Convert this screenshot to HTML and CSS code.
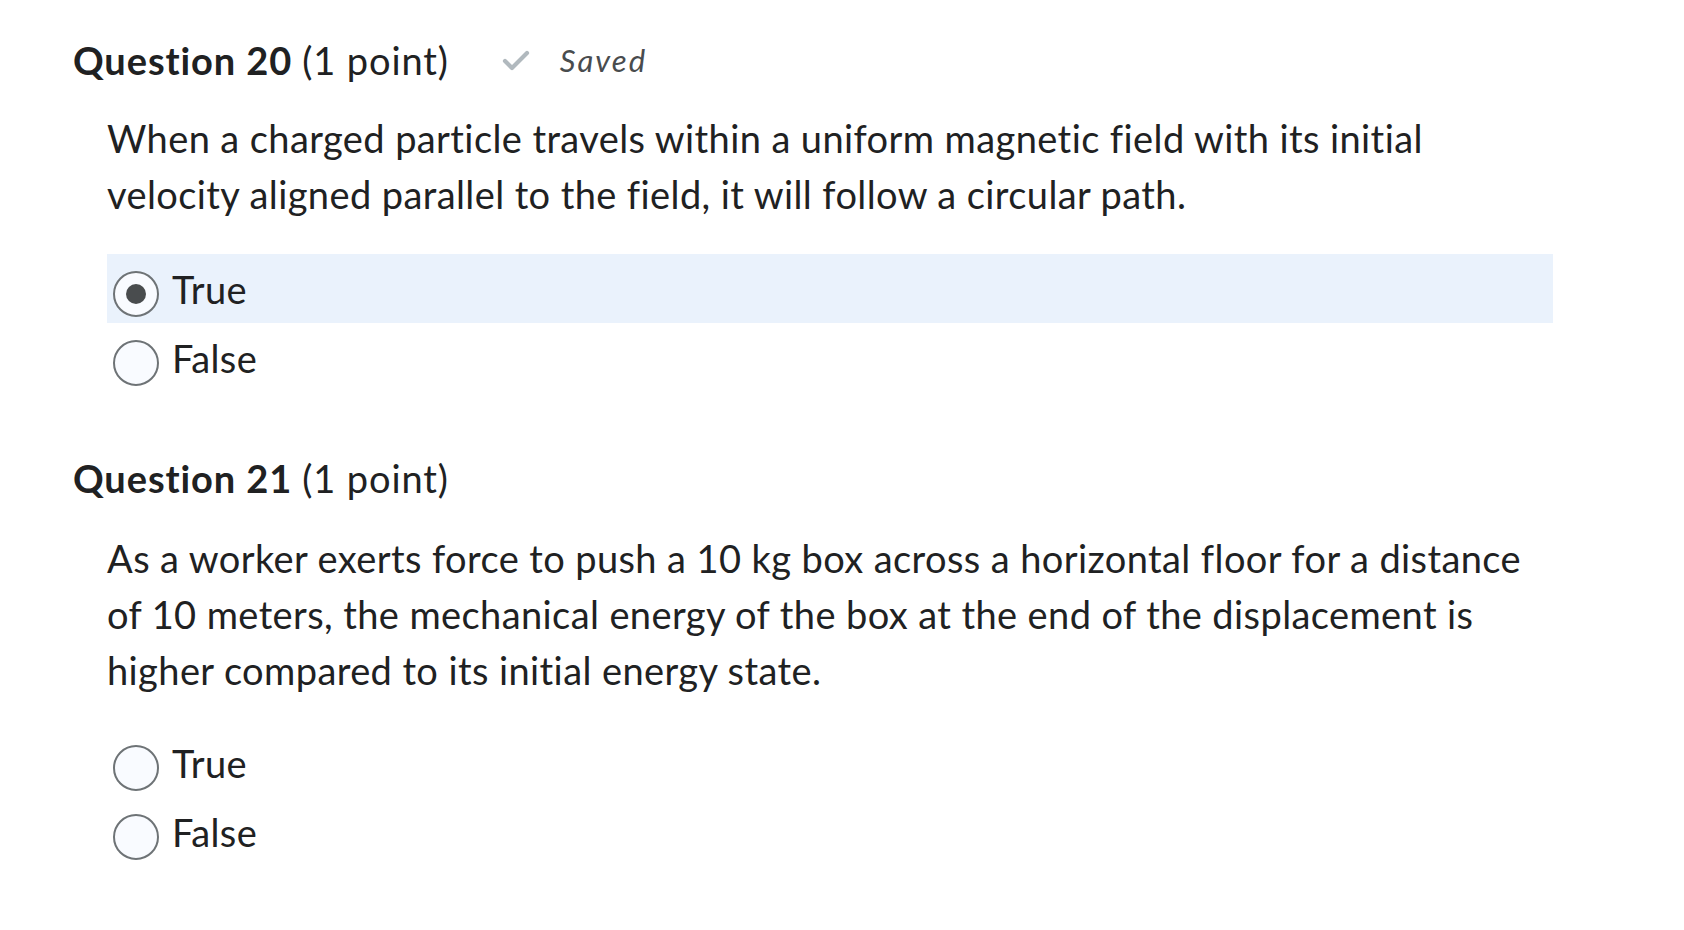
FILE: index.html
```html
<!DOCTYPE html>
<html lang="en">
<head>
    <meta charset="UTF-8">
    <meta name="viewport" content="width=device-width, initial-scale=1.0">
    <title>Quiz</title>
    <link rel="stylesheet" href="styles.css">
</head>
<body>

    <div class="quiz">
        <div class="question">
            <h2 class="question-title">
                <strong>Question 20</strong> <span class="points">(1 point)</span>
                <span class="saved">
                    <svg class="saved-icon" width="28" height="21" viewBox="0 0 28 21">
                        <path d="M3 11 L10 18 L25 3" fill="none" stroke="#b1b9be" stroke-width="4.2" stroke-linecap="round" stroke-linejoin="round"/>
                    </svg>
                    <em>Saved</em>
                </span>
            </h2>
            <div class="question-body">
                <p class="question-text">When a charged particle travels within a uniform magnetic field with its initial velocity aligned parallel to the field, it will follow a circular path.</p>
                <div class="options">
                    <label class="option selected">
                        <span class="radio checked"></span>
                        <span class="option-label">True</span>
                    </label>
                    <label class="option">
                        <span class="radio"></span>
                        <span class="option-label">False</span>
                    </label>
                </div>
            </div>
        </div>

        <div class="question second">
            <h2 class="question-title">
                <strong>Question 21</strong> <span class="points">(1 point)</span>
            </h2>
            <div class="question-body">
                <p class="question-text">As a worker exerts force to push a 10 kg box across a horizontal floor for a distance of 10 meters, the mechanical energy of the box at the end of the displacement is higher compared to its initial energy state.</p>
                <div class="options">
                    <label class="option">
                        <span class="radio"></span>
                        <span class="option-label">True</span>
                    </label>
                    <label class="option">
                        <span class="radio"></span>
                        <span class="option-label">False</span>
                    </label>
                </div>
            </div>
        </div>
    </div>

</body>
</html>
```

FILE: styles.css
```css
body {
    margin: 0;
    font-family: Lato, "Noto Sans", sans-serif;
    color: #202122;
    background-color: #fff;
    font-variant-ligatures: none;
}

.quiz {
    padding: 35px 0 0 73px;
    width: 1480px;
}

.question-title {
    margin: 0;
    font-size: 38px;
    line-height: 50px;
    font-weight: normal;
    letter-spacing: 0.9px;
    display: flex;
    align-items: center;
}

.question-title strong {
    font-weight: bold;
}

.points {
    margin-left: 10px;
}

.saved {
    display: flex;
    align-items: center;
    margin-left: 53px;
    color: #494c4e;
    font-size: 31px;
    letter-spacing: 2px;
}

.saved-icon {
    margin-right: 30px;
}

.question-body {
    padding-left: 34px;
}

.question-text {
    margin: 25px 0 0;
    font-size: 38px;
    line-height: 56px;
    letter-spacing: 0.4px;
}

.options {
    margin-top: 32px;
}

.option {
    display: flex;
    align-items: center;
    height: 69px;
    padding-left: 6px;
    font-size: 38px;
    letter-spacing: 0.4px;
}

.option.selected {
    background-color: #eaf2fc;
}

.radio {
    box-sizing: border-box;
    width: 46px;
    height: 46px;
    margin-top: 11px;
    margin-right: 13px;
    border: 2px solid #6e7376;
    border-radius: 50%;
    background-color: #f9fbff;
    display: flex;
    justify-content: center;
    align-items: center;
}

.radio.checked::after {
    content: "";
    width: 20px;
    height: 20px;
    border-radius: 50%;
    background-color: #494c4e;
}

.second {
    margin-top: 61px;
}

.second .question-text {
    margin-top: 27px;
}

.second .options {
    margin-top: 30px;
}
```
